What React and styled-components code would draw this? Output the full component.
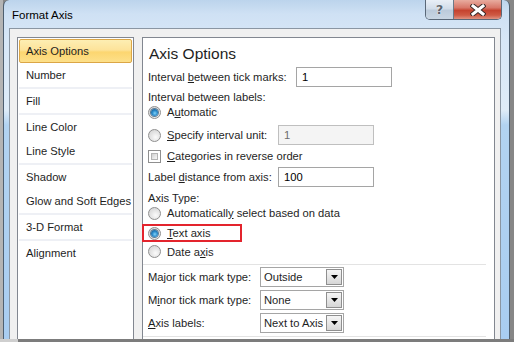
import React from 'react'
import styled, { createGlobalStyle } from 'styled-components'

const GlobalStyle = createGlobalStyle`
  html, body { margin: 0; padding: 0; }
  body {
    width: 514px;
    height: 342px;
    overflow: hidden;
    font-family: "Liberation Sans", Arial, sans-serif;
    font-size: 11.2px;
    color: #000;
  }
`

const categories = [
  { label: 'Axis Options', selected: true },
  { label: 'Number', sep: true },
  { label: 'Fill', sep: true },
  { label: 'Line Color' },
  { label: 'Line Style', sep: true },
  { label: 'Shadow' },
  { label: 'Glow and Soft Edges', sep: true },
  { label: '3-D Format', sep: true },
  { label: 'Alignment' },
]

function Radio({ checked }) {
  return <RadioCircle $checked={checked}>{checked && <RadioDot />}</RadioCircle>
}

function Select({ value }) {
  return (
    <SelectBox>
      <SelectValue>{value}</SelectValue>
      <SelectButton>
        <svg width="7" height="4" viewBox="0 0 7 4">
          <path d="M0 0h7L3.5 4z" fill="#000" />
        </svg>
      </SelectButton>
    </SelectBox>
  )
}

export default function App() {
  return (
    <Window>
      <GlobalStyle />
      <Frame>
        <TitleBar>
          <Title>Format Axis</Title>
          <Caption>
            <HelpButton>?</HelpButton>
            <CloseButton>
              <svg width="16" height="12" viewBox="0 0 16 12">
                <path d="M3 2l10 8M13 2L3 10" stroke="#3b2a28" strokeWidth="5" strokeLinecap="square" />
                <path d="M3 2l10 8M13 2L3 10" stroke="#fff" strokeWidth="3" strokeLinecap="square" />
              </svg>
            </CloseButton>
          </Caption>
        </TitleBar>
        <Client>
          <CategoryList>
            {categories.map((c) => (
              <React.Fragment key={c.label}>
                <CategoryItem $selected={c.selected}>{c.label}</CategoryItem>
                {c.sep && <CategorySep />}
              </React.Fragment>
            ))}
          </CategoryList>
          <Panel>
            <Heading>Axis Options</Heading>
            <Row $h={24}>
              <Label $w={148}><span>Interval <u>b</u>etween tick marks:</span></Label>
              <TextBox>1</TextBox>
            </Row>
            <Row $h={15}>
              <span>Interval between labels:</span>
            </Row>
            <Row $h={16}>
              <Radio checked />
              <OptionText>A<u>u</u>tomatic</OptionText>
            </Row>
            <Row $h={30}>
              <Label $w={130}>
                <Radio />
                <OptionText><u>S</u>pecify interval unit:</OptionText>
              </Label>
              <TextBox $disabled>1</TextBox>
            </Row>
            <Row $h={12}>
              <CheckBox />
              <OptionText><u>C</u>ategories in reverse order</OptionText>
            </Row>
            <Row $h={30}>
              <Label $w={130}><span>Label <u>d</u>istance from axis:</span></Label>
              <TextBox>100</TextBox>
            </Row>
            <Row $h={12}>
              <span>Axis Type:</span>
            </Row>
            <Row $h={18}>
              <Radio />
              <OptionText>Automaticall<u>y</u> select based on data</OptionText>
            </Row>
            <Row $h={20}>
              <Highlight>
                <Radio checked />
                <OptionText><u>T</u>ext axis</OptionText>
              </Highlight>
            </Row>
            <Row $h={19}>
              <Radio />
              <OptionText>Date a<u>x</u>is</OptionText>
            </Row>
            <Divider $top={3} />
            <Row $h={24}>
              <Label $w={112}><span>Major tick mark type:</span></Label>
              <Select value="Outside" />
            </Row>
            <Row $h={22}>
              <Label $w={112}><span>M<u>i</u>nor tick mark type:</span></Label>
              <Select value="None" />
            </Row>
            <Row $h={24}>
              <Label $w={112}><span><u>A</u>xis labels:</span></Label>
              <Select value="Next to Axis" />
            </Row>
            <Divider $top={1} />
          </Panel>
        </Client>
      </Frame>
      <BottomEdge />
    </Window>
  )
}

const Window = styled.div`
  width: 514px;
  height: 342px;
  display: flex;
  flex-direction: column;
  background: linear-gradient(to right, #b4b4b4 0, #b4b4b4 3px, #868686 3px);
  overflow: hidden;
`
const Frame = styled.div`
  flex: 1;
  min-height: 0;
  margin: 0 4px 0 3px;
  display: flex;
  flex-direction: column;
  border: 1px solid #4e5f70;
  border-top: none;
  border-bottom: none;
  border-radius: 6px 6px 0 0;
  background: linear-gradient(180deg, #bcd4ec 0, #cfe1f4 14px, #d7e7f7 40px, #dfecf8 110px, #b2d3f1 125px, #a9cdf1 100%);
`
const TitleBar = styled.div`
  height: 28px;
  display: flex;
  justify-content: space-between;
  align-items: flex-start;
  padding: 0 7px 0 8px;
`
const Title = styled.div`
  line-height: 30px;
  font-size: 11.5px;
  color: #000;
`
const Caption = styled.div`
  display: flex;
  height: 19px;
  border: 1px solid #5a6878;
  border-top: none;
  border-radius: 0 0 5px 5px;
  overflow: hidden;
`
const HelpButton = styled.div`
  width: 27px;
  display: flex;
  align-items: center;
  justify-content: center;
  background: linear-gradient(180deg, #e9eff6 0, #d2dde9 45%, #bccbdb 55%, #c9d6e3 100%);
  border-right: 1px solid #6c7a89;
  font: bold 13px "DejaVu Sans", sans-serif;
  color: #5d6670;
  text-shadow: 0 0 1px #fff, 0 0 1px #fff;
`
const CloseButton = styled.div`
  width: 47px;
  display: flex;
  align-items: center;
  justify-content: center;
  background: linear-gradient(180deg, #e8ac9f 0, #d8786a 40%, #c5432f 55%, #cf5a44 80%, #e09382 100%);
`
const Client = styled.div`
  flex: 1;
  min-height: 0;
  display: flex;
  gap: 8px;
  margin: 0 8px 0 5px;
  padding: 8px 5px 0 7px;
  background: #f0f0f0;
  border: 1px solid #8a96a3;
  border-bottom: none;
  overflow: hidden;
`
const CategoryList = styled.div`
  width: 115px;
  height: 320px;
  flex-shrink: 0;
  padding-top: 1px;
  background: #fff;
  border: 1px solid #828790;
`
const CategoryItem = styled.div`
  height: 24px;
  margin: 0 1px;
  padding-left: 6px;
  display: flex;
  align-items: center;
  box-sizing: border-box;
  white-space: nowrap;
  color: #1e1e1e;
  border: 1px solid ${(p) => (p.$selected ? '#dba646' : 'transparent')};
  border-radius: 2px;
  background: ${(p) => (p.$selected ? 'linear-gradient(180deg, #fdeeb3 0, #fde39a 45%, #fcd670 55%, #fde08a 100%)' : 'transparent')};
`
const CategorySep = styled.div`
  height: 2px;
  margin: 0 1px;
  background: #eef0f5;
`
const Panel = styled.div`
  width: 346px;
  height: 320px;
  flex-shrink: 0;
  padding-left: 5px;
  display: flex;
  flex-direction: column;
  background: #fff;
  border: 1px solid #828790;
`
const Heading = styled.div`
  font-size: 15.5px;
  line-height: 20px;
  padding: 6px 0 1px 1px;
  color: #1e1e1e;
  white-space: nowrap;
`
const Row = styled.div`
  height: ${(p) => p.$h}px;
  display: flex;
  align-items: center;
  white-space: nowrap;
  color: #1e1e1e;
`
const Label = styled.div`
  width: ${(p) => p.$w}px;
  flex-shrink: 0;
  display: flex;
  align-items: center;
`
const OptionText = styled.span`
  margin-left: 6px;
`
const TextBox = styled.div`
  width: 96px;
  height: 20px;
  box-sizing: border-box;
  padding-left: 5px;
  display: flex;
  align-items: center;
  border: 1px solid ${(p) => (p.$disabled ? '#bfbfbf' : '#a5a5a5')};
  background: ${(p) => (p.$disabled ? '#f4f4f4' : '#fff')};
  color: ${(p) => (p.$disabled ? '#6d6d6d' : '#000')};
`
const RadioCircle = styled.span`
  width: 13px;
  height: 13px;
  box-sizing: border-box;
  flex-shrink: 0;
  border-radius: 50%;
  border: 1px solid #8f8f8f;
  display: flex;
  align-items: center;
  justify-content: center;
  background: radial-gradient(circle at 60% 65%, #fbfbfb 0, #e6e6e6 45%, #cfcfcf 100%);
`
const RadioDot = styled.span`
  width: 7px;
  height: 7px;
  border-radius: 50%;
  background: radial-gradient(circle at 55% 60%, #7fd3fa 0, #2a89c9 45%, #104c7e 100%);
  box-shadow: 0 0 0 1px #5e7d96;
`
const CheckBox = styled.span`
  width: 13px;
  height: 13px;
  box-sizing: border-box;
  flex-shrink: 0;
  border: 1px solid #8f8f8f;
  background: #fff;
  padding: 2px;
  &::after {
    content: '';
    display: block;
    width: 100%;
    height: 100%;
    background: linear-gradient(135deg, #cfcfcf 0, #e9e9e9 60%, #f6f6f6 100%);
    border: 1px solid #b4b4b4;
    box-sizing: border-box;
  }
`
const Highlight = styled.div`
  align-self: flex-end;
  width: 100px;
  height: 18px;
  margin-left: -6px;
  padding-left: 4px;
  box-sizing: border-box;
  display: flex;
  align-items: center;
  border: 2px solid #e3242d;
`
const Divider = styled.div`
  height: 1px;
  flex-shrink: 0;
  margin: ${(p) => p.$top}px 8px 0 -5px;
  background: #e3e3e3;
`
const SelectBox = styled.div`
  width: 84px;
  height: 20px;
  box-sizing: border-box;
  display: flex;
  align-items: center;
  justify-content: space-between;
  border: 1px solid #a5a5a5;
  background: #fff;
  padding: 1px;
`
const SelectValue = styled.span`
  padding-left: 2px;
`
const SelectButton = styled.span`
  width: 16px;
  height: 16px;
  box-sizing: border-box;
  display: flex;
  align-items: center;
  justify-content: center;
  border: 1px solid #8f8f8f;
  background: linear-gradient(180deg, #f5f5f5 0, #e6e6e6 50%, #d6d6d6 100%);
`
const BottomEdge = styled.div`
  height: 3px;
  flex-shrink: 0;
  background: linear-gradient(to right, #cfcfcf 0, #cfcfcf 18px, #7c7c7c 18px);
`
